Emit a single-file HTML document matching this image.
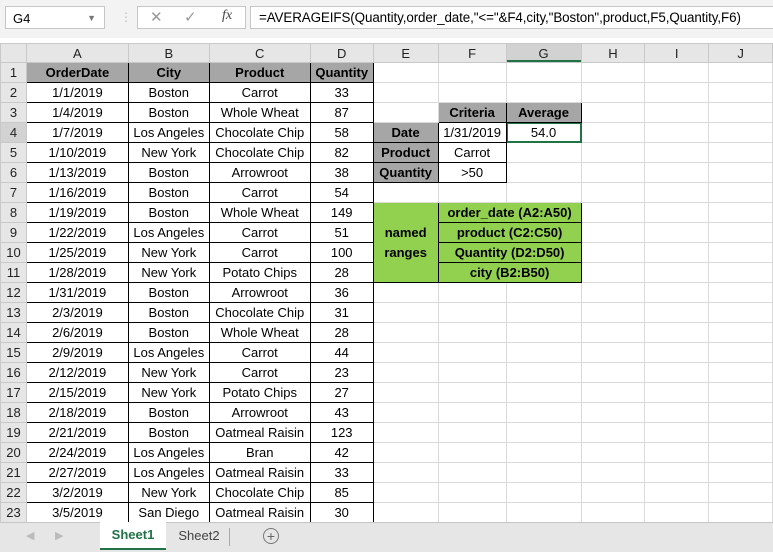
<!DOCTYPE html><html><head><style>
body{margin:0;width:773px;height:551px;overflow:hidden;background:#fff;font-family:"Liberation Sans",Arial,sans-serif;position:relative}
.top{position:absolute;left:0;top:0;width:773px;height:38px;background:#f3f3f3}
.nb{position:absolute;left:5px;top:6px;width:100px;height:23px;background:#fff;border:1px solid #c6c6c6;font-size:13px;line-height:23px;box-sizing:border-box;padding-left:7px}
.fx{position:absolute;left:137px;top:6px;width:109px;height:23px;background:#fff;border:1px solid #c6c6c6;box-sizing:border-box;color:#999;font-size:15px}
.fb{position:absolute;left:250px;top:6px;width:530px;height:23px;background:#fff;border:1px solid #c6c6c6;box-sizing:border-box;font-size:13.4px;line-height:21px;padding-left:8px;white-space:nowrap;letter-spacing:-0.1px}
table{position:absolute;left:0;top:43px;border-collapse:collapse;table-layout:fixed;font-size:13px}
td{height:19px;padding:0;border:1px solid #dadada;text-align:center;white-space:nowrap;overflow:hidden}
tr.h td{height:18px;background:#e6e6e6;border-color:#c8c8c8;color:#222}
td.r{background:#e6e6e6;border-color:#c8c8c8;color:#222;text-align:center}
.k{border:1px solid #000}
.g{background:#a6a6a6;font-weight:bold}
.gr{background:#92d050;font-weight:bold;border:1px solid #000}
.sel{background:#d2d2d2!important}
.tabs{position:absolute;left:0;top:522px;width:773px;height:29px;background:#e6e6e6;border-top:1px solid #c6c6c6}
</style></head><body>
<div class="top">
<div class="nb">G4<span style="position:absolute;right:8px;top:0;color:#777;font-size:9px">▼</span></div>
<div style="position:absolute;left:120px;top:10px;color:#bbb;font-size:12px">⋮</div>
<div class="fx"><span style="position:absolute;left:12px;top:1px">✕</span><span style="position:absolute;left:46px;top:1px">✓</span><span style="position:absolute;left:84px;top:1px;font-family:'Liberation Serif',serif;font-style:italic;color:#444;font-size:14px">fx</span></div>
<div class="fb">=AVERAGEIFS(Quantity,order_date,"&lt;="&amp;F4,city,"Boston",product,F5,Quantity,F6)</div>
</div>
<table>
<colgroup><col style="width:26px"><col style="width:102px"><col style="width:81px"><col style="width:101px"><col style="width:63px"><col style="width:65px"><col style="width:68px"><col style="width:75px"><col style="width:64px"><col style="width:64px"><col style="width:64px"></colgroup>
<tr class="h"><td></td><td>A</td><td>B</td><td>C</td><td>D</td><td>E</td><td>F</td><td class="sel" style="box-shadow:inset 0 -2px 0 #217346">G</td><td>H</td><td>I</td><td>J</td></tr>
<tr><td class="r">1</td><td class="k g">OrderDate</td><td class="k g">City</td><td class="k g">Product</td><td class="k g">Quantity</td><td></td><td></td><td></td><td></td><td></td><td></td></tr>
<tr><td class="r">2</td><td class="k">1/1/2019</td><td class="k">Boston</td><td class="k">Carrot</td><td class="k">33</td><td></td><td></td><td></td><td></td><td></td><td></td></tr>
<tr><td class="r">3</td><td class="k">1/4/2019</td><td class="k">Boston</td><td class="k">Whole Wheat</td><td class="k">87</td><td></td><td class="k g">Criteria</td><td class="k g">Average</td><td></td><td></td><td></td></tr>
<tr><td class="r sel">4</td><td class="k">1/7/2019</td><td class="k">Los Angeles</td><td class="k">Chocolate Chip</td><td class="k">58</td><td class="k g">Date</td><td class="k">1/31/2019</td><td style="border:1px solid #217346;box-shadow:inset 0 0 0 1px #217346">54.0</td><td></td><td></td><td></td></tr>
<tr><td class="r">5</td><td class="k">1/10/2019</td><td class="k">New York</td><td class="k">Chocolate Chip</td><td class="k">82</td><td class="k g">Product</td><td class="k">Carrot</td><td></td><td></td><td></td><td></td></tr>
<tr><td class="r">6</td><td class="k">1/13/2019</td><td class="k">Boston</td><td class="k">Arrowroot</td><td class="k">38</td><td class="k g">Quantity</td><td class="k">&gt;50</td><td></td><td></td><td></td><td></td></tr>
<tr><td class="r">7</td><td class="k">1/16/2019</td><td class="k">Boston</td><td class="k">Carrot</td><td class="k">54</td><td></td><td></td><td></td><td></td><td></td><td></td></tr>
<tr><td class="r">8</td><td class="k">1/19/2019</td><td class="k">Boston</td><td class="k">Whole Wheat</td><td class="k">149</td><td class="gr" rowspan="4" style="white-space:normal;line-height:20px">named<br>ranges</td><td class="gr" colspan="2">order_date (A2:A50)</td><td></td><td></td><td></td></tr>
<tr><td class="r">9</td><td class="k">1/22/2019</td><td class="k">Los Angeles</td><td class="k">Carrot</td><td class="k">51</td><td class="gr" colspan="2">product (C2:C50)</td><td></td><td></td><td></td></tr>
<tr><td class="r">10</td><td class="k">1/25/2019</td><td class="k">New York</td><td class="k">Carrot</td><td class="k">100</td><td class="gr" colspan="2">Quantity (D2:D50)</td><td></td><td></td><td></td></tr>
<tr><td class="r">11</td><td class="k">1/28/2019</td><td class="k">New York</td><td class="k">Potato Chips</td><td class="k">28</td><td class="gr" colspan="2">city (B2:B50)</td><td></td><td></td><td></td></tr>
<tr><td class="r">12</td><td class="k">1/31/2019</td><td class="k">Boston</td><td class="k">Arrowroot</td><td class="k">36</td><td></td><td></td><td></td><td></td><td></td><td></td></tr>
<tr><td class="r">13</td><td class="k">2/3/2019</td><td class="k">Boston</td><td class="k">Chocolate Chip</td><td class="k">31</td><td></td><td></td><td></td><td></td><td></td><td></td></tr>
<tr><td class="r">14</td><td class="k">2/6/2019</td><td class="k">Boston</td><td class="k">Whole Wheat</td><td class="k">28</td><td></td><td></td><td></td><td></td><td></td><td></td></tr>
<tr><td class="r">15</td><td class="k">2/9/2019</td><td class="k">Los Angeles</td><td class="k">Carrot</td><td class="k">44</td><td></td><td></td><td></td><td></td><td></td><td></td></tr>
<tr><td class="r">16</td><td class="k">2/12/2019</td><td class="k">New York</td><td class="k">Carrot</td><td class="k">23</td><td></td><td></td><td></td><td></td><td></td><td></td></tr>
<tr><td class="r">17</td><td class="k">2/15/2019</td><td class="k">New York</td><td class="k">Potato Chips</td><td class="k">27</td><td></td><td></td><td></td><td></td><td></td><td></td></tr>
<tr><td class="r">18</td><td class="k">2/18/2019</td><td class="k">Boston</td><td class="k">Arrowroot</td><td class="k">43</td><td></td><td></td><td></td><td></td><td></td><td></td></tr>
<tr><td class="r">19</td><td class="k">2/21/2019</td><td class="k">Boston</td><td class="k">Oatmeal Raisin</td><td class="k">123</td><td></td><td></td><td></td><td></td><td></td><td></td></tr>
<tr><td class="r">20</td><td class="k">2/24/2019</td><td class="k">Los Angeles</td><td class="k">Bran</td><td class="k">42</td><td></td><td></td><td></td><td></td><td></td><td></td></tr>
<tr><td class="r">21</td><td class="k">2/27/2019</td><td class="k">Los Angeles</td><td class="k">Oatmeal Raisin</td><td class="k">33</td><td></td><td></td><td></td><td></td><td></td><td></td></tr>
<tr><td class="r">22</td><td class="k">3/2/2019</td><td class="k">New York</td><td class="k">Chocolate Chip</td><td class="k">85</td><td></td><td></td><td></td><td></td><td></td><td></td></tr>
<tr><td class="r">23</td><td class="k">3/5/2019</td><td class="k">San Diego</td><td class="k">Oatmeal Raisin</td><td class="k">30</td><td></td><td></td><td></td><td></td><td></td><td></td></tr>
</table>
<div class="tabs">
<span style="position:absolute;left:26px;top:6px;color:#bbb;font-size:11px">◀</span>
<span style="position:absolute;left:55px;top:6px;color:#bbb;font-size:11px">▶</span>
<div style="position:absolute;left:100px;top:-1px;width:66px;height:26px;background:#fff;border-bottom:2px solid #217346;color:#217346;font-weight:bold;font-size:13px;text-align:center;line-height:26px">Sheet1</div>
<div style="position:absolute;left:170px;top:0;width:58px;height:26px;color:#444;font-size:13px;text-align:center;line-height:26px">Sheet2</div>
<div style="position:absolute;left:229px;top:5px;width:1px;height:18px;background:#aaa"></div>
<div style="position:absolute;left:263px;top:5px;width:14px;height:14px;border:1px solid #777;border-radius:50%;color:#666;font-size:14px;line-height:14px;text-align:center">+</div>
</div>
</body></html>
